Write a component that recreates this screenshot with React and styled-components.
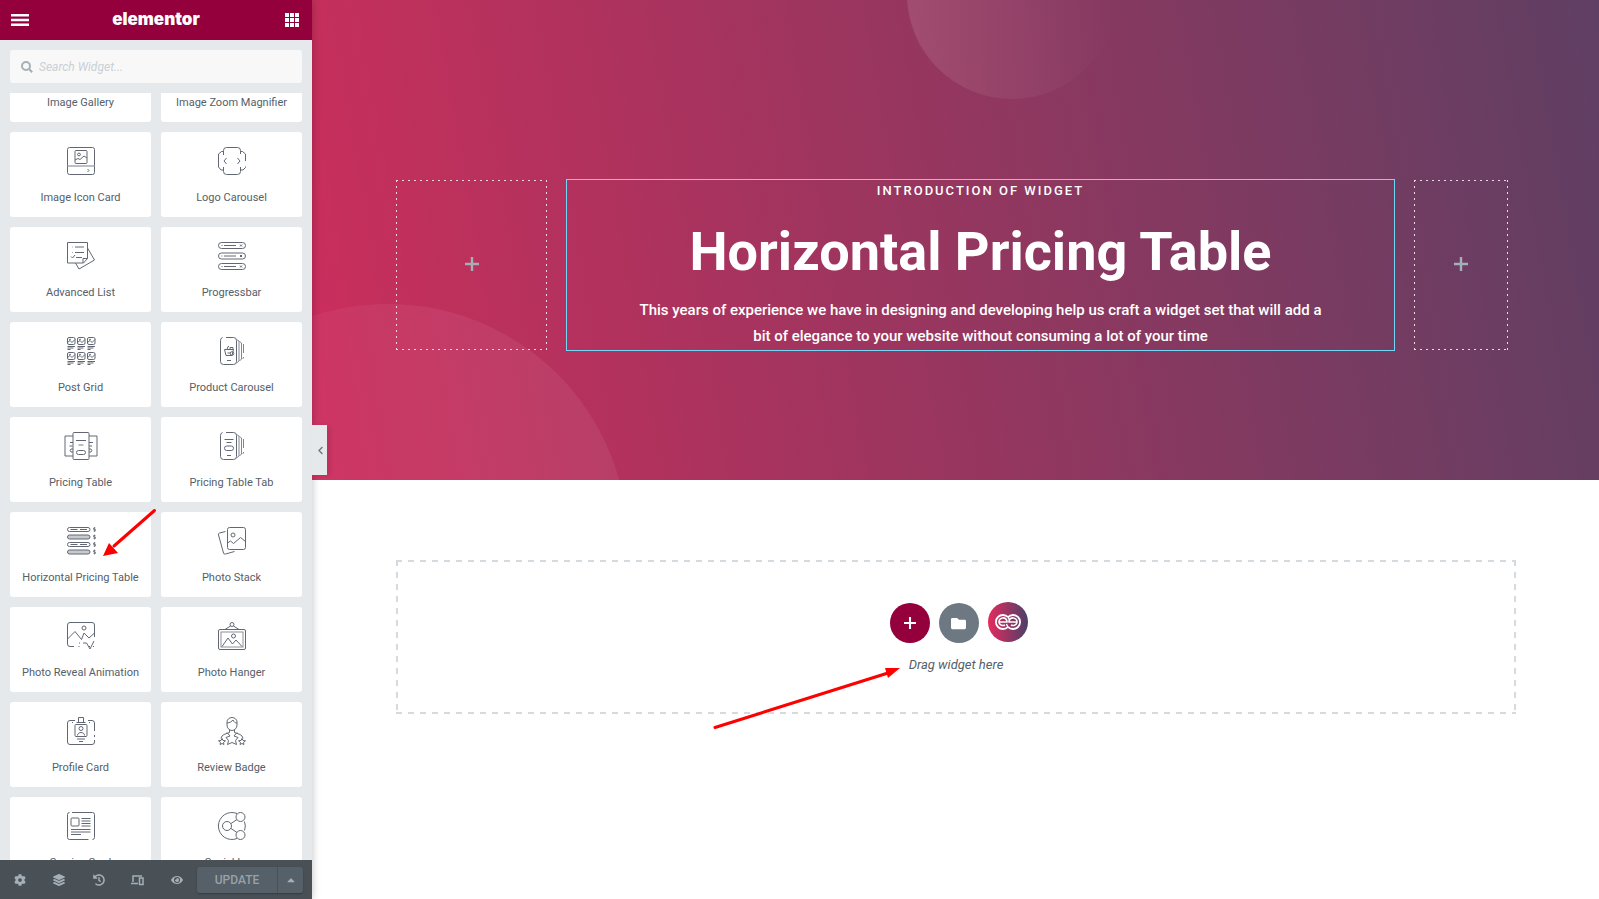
import React from 'react'
import styled, { createGlobalStyle, css } from 'styled-components'
import { FaCog, FaLayerGroup, FaHistory, FaEye, FaCaretUp, FaChevronLeft, FaFolder } from 'react-icons/fa'

const GlobalStyle = createGlobalStyle`
  * {
    box-sizing: border-box;
  }
  body {
    margin: 0;
    font-family: Roboto, "Liberation Sans", sans-serif;
    background-color: #fff;
  }
  button {
    font-family: inherit;
    border: none;
    padding: 0;
    cursor: pointer;
  }
`

/// all widget icons are drawn on the same 28 x 28 grid
const icons = {
  imageCard: (
    <>
      <rect x="0.5" y="0.5" width="27" height="27" rx="2" />
      <path d="M0.5 19h27" stroke="#a9aab0" strokeWidth="1.500" />
      <path d="M20.500 22l1.500 1.500-1.500 1.500" />
      <rect x="8" y="3.500" width="12" height="13" rx="1" />
      <circle cx="12" cy="7.500" r="1.400" />
      <path d="M8 13l3-1.500 2 1 4-3.500 3 2" />
    </>
  ),
  logoCarousel: (
    <>
      <path d="M5.500 8V3.500a3 3 0 0 1 3-3h11a3 3 0 0 1 3 3V7M22.500 20v4.500a3 3 0 0 1-3 3h-11a3 3 0 0 1-3-3V20" />
      <path d="M5.500 4.500H3.500L0.500 7v13l2.500 3h2.500M22.500 4.500h2L27.500 7v7M27.500 19.500v1L25 23h-2.500" />
      <path d="M8.500 11L6 14l2.500 3M19.500 11l2.500 3-2.500 3" />
    </>
  ),
  advancedList: (
    <>
      <path d="M0.500 0.500h20v16l-4 4.500h-16zM20.500 16.500h-4.500V21" />
      <path d="M5 5h.5M8 5h9M5 10.500h.5M8 10.500h9M4 14.500l1.500 1.500 2.500-3M9 15.500h6" />
      <path d="M20.500 6l7 12-15.500 9-3.500-6" />
    </>
  ),
  progressbar: (
    <>
      {[0.5, 11, 21.500].map((y) => (
        <g key={y}>
          <rect x="0.5" y={y} width="27" height="6" rx="3" />
          <path d={`M3.500 ${y + 3}h1M6 ${y + 3}h12M22 ${y + 2}l2 2M24 ${y + 2}l-2 2`} />
        </g>
      ))}
    </>
  ),
  postGrid: (
    <>
      {[0.5, 15.500].map((y) =>
        [0.5, 10.500, 20.500].map((x) => (
          <g key={x + '-' + y}>
            <rect x={x} y={y} width="7.500" height="7" rx="1.500" />
            <path d={`M${x} ${y + 5}l2.500-2 2 2 3-3M${x} ${y + 9}h7.500M${x} ${y + 10.500}h6M${x} ${y + 12}h3`} />
            <circle cx={x + 2.500} cy={y + 2} r="0.500" />
          </g>
        )),
      )}
    </>
  ),
  productCarousel: (
    <>
      <path d="M4.500 0.500a3 3 0 0 0-2 3v21a3 3 0 0 0 3 3h10a3 3 0 0 0 3-3v-21a3 3 0 0 0-3-3H8" />
      <path d="M18.500 2.500l2.500 1.500v20l-2.500 2M21.500 4.500l2 1.500v16l-2 2M25.500 7v9M25.500 20v1l-1 1" strokeWidth="0.800" />
      <path d="M6.500 12.500h9l-1.500 6h-6zM9 12.500l1-3h1M12 12.500v-2h3v2M9.500 16h3M9 23.500h4" />
      <circle cx="14" cy="16.500" r="1.800" />
    </>
  ),
  pricingTable: (
    <>
      <rect x="6" y="0.500" width="16" height="27" rx="1" />
      <path d="M6 4h-8v20h8M22 4h8v20h-8M9 8.500h10M3 10.500h3M2.500 14h3M22 10.500h4M22 14h3" />
      <path d="M11.500 13h5" stroke="#a9aab0" strokeWidth="1.500" />
      <rect x="9.500" y="18.500" width="9" height="4" rx="2" />
      <path d="M6 17H4a2 2 0 0 0 0 3h2M22 17h2a2 2 0 0 1 0 3h-2" />
    </>
  ),
  pricingTab: (
    <>
      <path d="M4.500 0.500a3 3 0 0 0-2 3v21a3 3 0 0 0 3 3h10a3 3 0 0 0 3-3v-21a3 3 0 0 0-3-3H8" />
      <path d="M18.500 2.500l2.500 1.500v20l-2.500 2M21.500 4.500l2 1.500v16l-2 2M25.500 7v9M25.500 20v1l-1 1" strokeWidth="0.800" />
      <path d="M6.500 7.500h9M8.500 10.500h5M9 23.500h4" />
      <rect x="6.500" y="14" width="9" height="4.500" rx="2.200" />
    </>
  ),
  horizontalTable: (
    <>
      {[0.5, 8, 15.500, 23].map((y, i) => (
        <g key={y}>
          <rect x="0.5" y={y} width="22.500" height="4" rx="2" fill={i % 2 ? '#c9cacf' : 'none'} />
          {i % 2 === 0 && <path d={`M3.500 ${y + 2}h7M13 ${y + 2}h7`} />}
          <path d={`M28.500 ${y + 0.500}h-2v1.500h2v1.500h-2M27.500 ${y - 0.500}v5`} strokeWidth="0.700" />
        </g>
      ))}
    </>
  ),
  photoStack: (
    <>
      <rect x="9.500" y="0.500" width="18" height="22" rx="2" />
      <circle cx="15" cy="8" r="2" />
      <path d="M9.500 16l3-2 3 2.500 7-6 5 4M7.500 4.500l-6 1.500a1.500 1.500 0 0 0-1 2L5.500 26a1.500 1.500 0 0 0 2 1l9-2.500" />
    </>
  ),
  photoReveal: (
    <>
      <path d="M7 24.500H3a2.500 2.500 0 0 1-2.500-2.500V3A2.500 2.500 0 0 1 3 0.500h22A2.500 2.500 0 0 1 27.500 3v12" />
      <path d="M0.500 17L8 9.500l6.500 8L17 11l5 5 5.500-5M11.500 24.500h1M12 21h1M16 21h3.500L23 27l4-8M26.500 24v1M22.500 24v1" />
      <circle cx="17" cy="6" r="2" />
    </>
  ),
  photoHanger: (
    <>
      <circle cx="14" cy="2.500" r="2" />
      <path d="M12.500 4L7 7.500M15.500 4l5.500 3.500" />
      <rect x="0.5" y="7.500" width="27" height="20" rx="1.500" />
      <rect x="3" y="10" width="22" height="15" stroke="#8f9097" />
      <path d="M4 24.500l6-8.500 4.500 6 3.500-4 6 6.500" />
      <circle cx="15.500" cy="14" r="2" />
    </>
  ),
  profileCard: (
    <>
      <path d="M8 3.500H3A2.500 2.500 0 0 0 0.500 6v19A2.500 2.500 0 0 0 3 27.500h22a2.500 2.500 0 0 0 2.500-2.500v-2M27.500 20v-2M27.500 14V6A2.500 2.500 0 0 0 25 3.500h-4" />
      <path d="M11.500 5.500v-5h5v5M9.500 5.500h9M5 5.500h1M22 5.500h1M10 22h8M12 24.500h4M10.500 18.500c0-4 7-4 7 0" />
      <rect x="8" y="7.500" width="12" height="12" rx="1" />
      <circle cx="14" cy="11.500" r="2" />
    </>
  ),
  reviewBadge: (
    <>
      <path d="M9 8V5a5 4.500 0 0 1 10 0v3a5 5.500 0 0 1-10 0zM9 6c3 0 5-2 6-3 1 2 2 3 4 3" />
      <path d="M11.500 12.500v3L6 17.500a5 5 0 0 0-3 4M16.500 12.500v3l5.500 2a5 5 0 0 1 3 4" />
      <path d="M9 15.500l3 3.500-4 1.500 2.500 3-1 4 4.500-2 4.500 2-1-4 2.500-3-4-1.500 3-3.500" />
      <path d="M4 21.500l1 2 2.500.3-2 1.700.5 2-2-1-2 1 .5-2-2-1.700 2.500-.3zM24 21.500l1 2 2.500.3-2 1.700.5 2-2-1-2 1 .5-2-2-1.700 2.500-.3z" />
    </>
  ),
  serviceCard: (
    <>
      <path d="M2.500 0.500a2 2 0 0 0-2 2v23a2 2 0 0 0 2 2h19M25.500 27.500a2 2 0 0 0 2-2v-23a2 2 0 0 0-2-2H5" />
      <rect x="4" y="6" width="8" height="8" rx="1" />
      <path d="M14.500 6.500h9M14.500 9h9M14.500 11.500h9M14.500 14h9M4 17.500h19.500M4 20h19.500M4 22.500h10" />
    </>
  ),
  socialIcon: (
    <>
      <path d="M19 1.500A13.500 13.500 0 1 0 19 26.500M26.500 9.500a13 13 0 0 1 0 9" />
      <circle cx="9" cy="14" r="4.500" />
      <circle cx="22.500" cy="5" r="4.500" />
      <circle cx="22.500" cy="23" r="4.500" />
      <path d="M13 11.500l6-4M13 16.500l6 4" />
    </>
  ),
}

const widgets = [
  { name: 'Image Gallery', icon: 'imageCard' },
  { name: 'Image Zoom Magnifier', icon: 'imageCard' },
  { name: 'Image Icon Card', icon: 'imageCard' },
  { name: 'Logo Carousel', icon: 'logoCarousel' },
  { name: 'Advanced List', icon: 'advancedList' },
  { name: 'Progressbar', icon: 'progressbar' },
  { name: 'Post Grid', icon: 'postGrid' },
  { name: 'Product Carousel', icon: 'productCarousel' },
  { name: 'Pricing Table', icon: 'pricingTable' },
  { name: 'Pricing Table Tab', icon: 'pricingTab' },
  { name: 'Horizontal Pricing Table', icon: 'horizontalTable' },
  { name: 'Photo Stack', icon: 'photoStack' },
  { name: 'Photo Reveal Animation', icon: 'photoReveal' },
  { name: 'Photo Hanger', icon: 'photoHanger' },
  { name: 'Profile Card', icon: 'profileCard' },
  { name: 'Review Badge', icon: 'reviewBadge' },
  { name: 'Service Card', icon: 'serviceCard' },
  { name: 'Social Icon', icon: 'socialIcon' },
]

const Panel = () => {
  return (
    <PanelWrapper>
      <PanelHeader>
        <IconButton type="button" aria-label="Menu">
          <svg width="18" height="12" viewBox="0 0 18 12" fill="#fff">
            <path d="M0 0h18v2.500H0zM0 4.800h18v2.400H0zM0 9.500h18v2.500H0z" />
          </svg>
        </IconButton>
        <Brand>elementor</Brand>
        <IconButton type="button" aria-label="Widgets">
          <svg width="14" height="14" viewBox="0 0 14 14" fill="#fff">
            {[0, 5, 10].map((y) => [0, 5, 10].map((x) => <rect key={x + '-' + y} x={x} y={y} width="4" height="4" />))}
          </svg>
        </IconButton>
      </PanelHeader>

      <SearchForm onSubmit={(e) => e.preventDefault()}>
        <label htmlFor="search" aria-label="Search Widget">
          <svg width="12" height="12" viewBox="0 0 12 12" fill="none" stroke="currentColor" strokeWidth="2">
            <circle cx="5" cy="5" r="4" />
            <path d="M8 8l3.200 3.200" />
          </svg>
        </label>
        <input type="text" id="search" name="search" placeholder="Search Widget..." />
      </SearchForm>

      {/* list is already scrolled, so its first row is cut */}
      <WidgetScroll>
        <WidgetGrid>
          {widgets.map((curElem) => {
            return (
              <WidgetCard type="button" key={curElem.name}>
                <svg width="28" height="28" viewBox="0 0 28 28">
                  {icons[curElem.icon]}
                </svg>
                <span>{curElem.name}</span>
              </WidgetCard>
            )
          })}
        </WidgetGrid>
      </WidgetScroll>

      <PanelFooter>
        <FooterTool type="button" aria-label="Settings"><FaCog /></FooterTool>
        <FooterTool type="button" aria-label="Navigator"><FaLayerGroup /></FooterTool>
        <FooterTool type="button" aria-label="History"><FaHistory /></FooterTool>
        <FooterTool type="button" aria-label="Responsive Mode">
          <svg width="13" height="12" viewBox="0 0 13 12" fill="none" stroke="currentColor" strokeWidth="1.500">
            <path d="M2 8V2h9M0 9.500h7" />
            <rect x="8.500" y="4" width="3.500" height="6.500" />
          </svg>
        </FooterTool>
        <FooterTool type="button" aria-label="Preview"><FaEye /></FooterTool>
        <UpdateGroup>
          <UpdateButton type="button">UPDATE</UpdateButton>
          <UpdateMore type="button" aria-label="Save Options"><FaCaretUp /></UpdateMore>
        </UpdateGroup>
      </PanelFooter>

      <PanelToggle type="button" aria-label="Hide Panel"><FaChevronLeft /></PanelToggle>
    </PanelWrapper>
  )
}

const Plus = ({ size = 14 }) => (
  <svg width={size} height={size} viewBox="0 0 14 14" stroke="currentColor" strokeWidth="2.400">
    <path d="M7 0v14M0 7h14" />
  </svg>
)

const Hero = () => {
  return (
    <HeroSection>
      <svg className="shapes" width="100%" height="480" aria-hidden="true">
        <defs>
          <linearGradient id="top" x1="0" y1="0.600" x2="1" y2="0.600">
            <stop offset="0" stopColor="#fff" stopOpacity="0.110" />
            <stop offset="1" stopColor="#fff" stopOpacity="0" />
          </linearGradient>
          <linearGradient id="bottom" x1="0.200" y1="0.500" x2="1" y2="0.400">
            <stop offset="0" stopColor="#d63a78" stopOpacity="0.140" />
            <stop offset="1" stopColor="#fff" stopOpacity="0.060" />
          </linearGradient>
        </defs>
        <circle cx="700" cy="-6" r="105" fill="url(#top)" />
        <circle cx="76" cy="544" r="240" fill="url(#bottom)" />
      </svg>
      <HeroRow>
        <EmptyColumn $width="151px" type="button" aria-label="Add to left column"><Plus /></EmptyColumn>
        <HeroText>
          <h4>INTRODUCTION OF WIDGET</h4>
          <h1>Horizontal Pricing Table</h1>
          <p>This years of experience we have in designing and developing help us craft a widget set that will add a bit of elegance to your website without consuming a lot of your time</p>
        </HeroText>
        <EmptyColumn $width="94px" type="button" aria-label="Add to right column"><Plus /></EmptyColumn>
      </HeroRow>
    </HeroSection>
  )
}

const App = () => {
  return (
    <Wrapper>
      <GlobalStyle />
      <Panel />
      <Preview>
        <Hero />
        <DropArea>
          <div className="buttons">
            <RoundButton $bg="#93003c" type="button" aria-label="Add New Section"><Plus size={12} /></RoundButton>
            <RoundButton $bg="#6d7882" type="button" aria-label="Add Template"><FaFolder size={15} /></RoundButton>
            <RoundButton $bg="linear-gradient(90deg, #e62a5e, #4b4068)" $raised type="button" aria-label="Exclusive Addons">
              <svg width="28" height="16" viewBox="0 0 28 16" fill="none" stroke="#fff" strokeWidth="1.800">
                <path d="M14 3.200A7 7 0 1 0 14 12.800" />
                <path d="M14 3.200A7 7 0 1 1 14 12.800" />
                <path d="M14 3.200a7 7 0 0 1 1.500 3M14 12.800a7 7 0 0 1-1.500-3" strokeWidth="1.400" />
                <path d="M4.500 8h8.500a4 3.800 0 1 0-2 3M23.500 8h-8.500a4 3.800 0 1 1 2 3" strokeWidth="1.600" />
              </svg>
            </RoundButton>
          </div>
          <p>Drag widget here</p>
        </DropArea>
      </Preview>

      {/* arrows drawn over the page */}
      <Arrow $left="100px" $top="505px" width="60" height="56">
        <path d="M54.500 5.500L14 41" />
        <polygon points="3,51 9,38 18,48" />
      </Arrow>
      <Arrow $left="710px" $top="660px" width="195" height="72">
        <path d="M5 67.500L178 13" />
        <polygon points="190,8 175,8 178,18" />
      </Arrow>
    </Wrapper>
  )
}

/// border with its own dash and gap, the browser one can not be set
const dashedBorder = (color, size, dash, period) => css`
  background-image:
    repeating-linear-gradient(90deg, ${color} 0 ${dash}px, transparent ${dash}px ${period}px),
    repeating-linear-gradient(90deg, ${color} 0 ${dash}px, transparent ${dash}px ${period}px),
    repeating-linear-gradient(180deg, ${color} 0 ${dash}px, transparent ${dash}px ${period}px),
    repeating-linear-gradient(180deg, ${color} 0 ${dash}px, transparent ${dash}px ${period}px);
  background-repeat: no-repeat;
  background-position: 0 0, 0 100%, 0 0, 100% 0;
  background-size: 100% ${size}px, 100% ${size}px, ${size}px 100%, ${size}px 100%;
`

const Wrapper = styled.div`
  display: flex;
  height: 100vh;
  overflow: hidden;
`

const PanelWrapper = styled.aside`
  position: relative;
  z-index: 1;
  flex: 0 0 312px;
  display: flex;
  flex-direction: column;
  background-color: #e6e9ec;
  box-shadow: 0 0 8px rgba(0, 0, 0, 0.25);
`

const PanelHeader = styled.header`
  flex: 0 0 40px;
  display: flex;
  align-items: center;
  justify-content: space-between;
  padding: 0 10px;
  background-color: #93003c;
`

const IconButton = styled.button`
  width: 20px;
  height: 40px;
  display: flex;
  align-items: center;
  justify-content: center;
  background: none;
`

const Brand = styled.div`
  padding-bottom: 3px;
  font-family: Inter, "Liberation Sans", sans-serif;
  font-size: 17px;
  font-weight: 900;
  color: #fff;
`

const SearchForm = styled.form`
  flex: 0 0 33px;
  display: flex;
  align-items: center;
  margin: 10px;
  padding: 0 11px;
  border-radius: 3px;
  background-color: #f8f8f8;

  label {
    display: flex;
    color: #a4afb7;
  }

  input {
    flex: 1;
    min-width: 0;
    padding: 0 6px;
    border: none;
    outline: none;
    background: none;
    font-family: Roboto, sans-serif;
    font-size: 12px;
    font-style: italic;
    color: #556068;

    &::placeholder {
      color: #c9d0d6;
    }
  }
`

const WidgetScroll = styled.div`
  flex: 1;
  min-height: 0;
  overflow: hidden;
  display: flex;
  flex-direction: column;
`

const WidgetGrid = styled.div`
  display: grid;
  grid-template-columns: 1fr 1fr;
  grid-auto-rows: 85px;
  gap: 10px;
  margin-top: -56px;
  padding: 0 10px;
`

const WidgetCard = styled.button`
  display: flex;
  flex-direction: column;
  align-items: center;
  justify-content: flex-start;
  gap: 16px;
  padding-top: 15px;
  border-radius: 3px;
  background-color: #fff;
  color: #556068;
  font-size: 11px;
  line-height: 14px;

  svg {
    overflow: visible;
    fill: none;
    stroke: #626873;
    stroke-width: 1;
  }
`

const PanelFooter = styled.footer`
  flex: 0 0 39px;
  display: flex;
  align-items: center;
  padding-right: 9px;
  background-color: #495157;
`

const FooterTool = styled.button`
  flex: 1;
  height: 39px;
  display: flex;
  align-items: center;
  justify-content: center;
  background: none;
  color: #a4afb7;
  font-size: 12px;
`

const UpdateGroup = styled.div`
  display: flex;
  gap: 1px;
  border-radius: 3px;
  overflow: hidden;
  box-shadow: 0 1px 2px rgba(0, 0, 0, 0.3);
`

const UpdateButton = styled.button`
  width: 80px;
  height: 26px;
  background-color: #556068;
  color: #98a2a9;
  font-size: 12px;
  font-weight: 500;
`

const UpdateMore = styled(UpdateButton)`
  width: 25px;
  display: flex;
  align-items: center;
  justify-content: center;
  color: #a4afb7;
`

const PanelToggle = styled.button`
  position: absolute;
  top: 425px;
  left: 100%;
  width: 15px;
  height: 50px;
  display: flex;
  align-items: center;
  justify-content: center;
  padding-left: 2px;
  background-color: #e6e9ec;
  box-shadow: 3px 1px 5px rgba(0, 0, 0, 0.1);
  color: #6d7882;
  font-size: 9px;
`

const Preview = styled.main`
  flex: 1;
  min-width: 0;
  background-color: #fff;
`

const HeroSection = styled.section`
  position: relative;
  padding: 179px 84px 129px;
  background: linear-gradient(80deg, #cd2e5e 0%, #c52f5c 6%, #5f3f63 100%);

  .shapes {
    position: absolute;
    top: 0;
    left: 0;
  }
`

const HeroRow = styled.div`
  position: relative;
  display: flex;
  gap: 19px;
  padding-right: 7px;
`

const EmptyColumn = styled.button`
  flex: 0 0 ${({ $width }) => $width};
  display: flex;
  align-items: center;
  justify-content: center;
  margin: 1px 0;
  padding-bottom: 2px;
  background-color: transparent;
  ${dashedBorder('#ead9e1', 1, 2, 6)}
  color: #a4afb7;
`

const HeroText = styled.div`
  flex: 1;
  height: 172px;
  padding: 0 70px;
  border: 1px solid #71d7f7;
  text-align: center;
  color: #fff;

  h4 {
    margin: 3px 0 0;
    font-size: 13px;
    line-height: 15px;
    font-weight: 500;
    letter-spacing: 2px;
  }

  h1 {
    margin: 22px 0 13px;
    font-size: 54px;
    line-height: 64px;
    font-weight: 700;
  }

  p {
    margin: 0;
    font-size: 15px;
    line-height: 26px;
    font-weight: 500;
  }
`

const DropArea = styled.section`
  display: flex;
  flex-direction: column;
  align-items: center;
  margin: 80px 83px 0 84px;
  padding: 43px 0 40px;
  ${dashedBorder('#d5dadf', 2, 6, 12)}

  .buttons {
    display: flex;
    gap: 9px;
    padding-left: 5px;
  }

  p {
    margin: 13px 0 0;
    font-size: 13px;
    line-height: 18px;
    font-style: italic;
    color: #556068;
  }
`

const RoundButton = styled.button`
  width: 40px;
  height: 40px;
  display: flex;
  align-items: center;
  justify-content: center;
  border-radius: 50%;
  margin-top: ${({ $raised }) => ($raised ? '-1px' : '0')};
  background: ${({ $bg }) => $bg};
  color: #fff;
`

const Arrow = styled.svg`
  position: absolute;
  z-index: 2;
  left: ${({ $left }) => $left};
  top: ${({ $top }) => $top};
  pointer-events: none;
  fill: #fe0000;

  path {
    stroke: #fe0000;
    stroke-width: 3;
    stroke-linecap: round;
  }
`

export default App
